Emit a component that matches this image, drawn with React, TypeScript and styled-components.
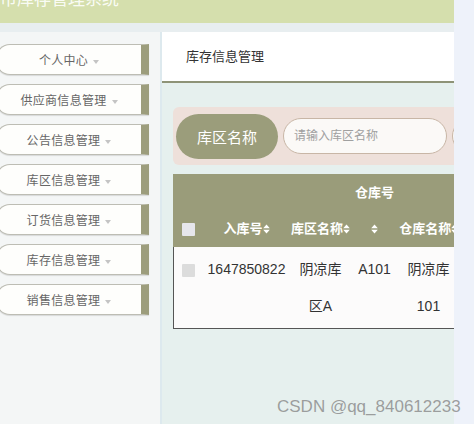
import styled, { createGlobalStyle } from 'styled-components';

const GlobalStyle = createGlobalStyle`
  html, body {
    margin: 0;
    padding: 0;
    background: #eef2fa;
    font-family: "Liberation Sans", "Noto Sans CJK SC", sans-serif;
  }
`;

const menus = ['个人中心', '供应商信息管理', '公告信息管理', '库区信息管理', '订货信息管理', '库存信息管理', '销售信息管理'];

const SortIcon = () => (
  <SortSvg width="7" height="10" viewBox="0 0 7 10">
    <path d="M3.5 0.5 L6.8 4.2 H0.2 Z M0.2 5.8 H6.8 L3.5 9.5 Z" fill="#fff" />
  </SortSvg>
);

const App = () => {
  return (
    <>
      <GlobalStyle />
      <Page>
        <TopBar>
          <Title>超市库存管理系统</Title>
        </TopBar>
        <Body>
          <Sidebar>
            {menus.map((m) => (
              <MenuItem key={m}>
                <MenuText>{m}</MenuText>
              </MenuItem>
            ))}
          </Sidebar>
          <Main>
            <Crumb>库存信息管理</Crumb>
            <SearchBar>
              <SearchLabel>库区名称</SearchLabel>
              <SearchInput placeholder="请输入库区名称" />
              <SearchInput placeholder="" />
            </SearchBar>
            <TableWrap>
              <Table>
                <colgroup>
                  <col style={{ width: 30 }} />
                  <col style={{ width: 86 }} />
                  <col style={{ width: 62 }} />
                  <col style={{ width: 46 }} />
                  <col style={{ width: 62 }} />
                </colgroup>
                <thead>
                  <tr>
                    <Th><Check $head /></Th>
                    <Th>入库号<SortIcon /></Th>
                    <Th>库区名称<SortIcon /></Th>
                    <Th>仓库号<SortIcon /></Th>
                    <Th>仓库名称<SortIcon /></Th>
                  </tr>
                </thead>
                <tbody>
                  <tr>
                    <Td><Check /></Td>
                    <Td>1647850822</Td>
                    <Td>阴凉库区A</Td>
                    <Td>A101</Td>
                    <Td>阴凉库101</Td>
                  </tr>
                </tbody>
              </Table>
            </TableWrap>
          </Main>
        </Body>
        <Watermark>CSDN @qq_840612233</Watermark>
      </Page>
    </>
  );
};

const Page = styled.div`
  position: relative;
  width: 454px;
  height: 424px;
  display: flex;
  flex-direction: column;
`;

const TopBar = styled.div`
  height: 23px;
  background: #d5dfad;
  overflow: hidden;
`;

const Title = styled.div`
  margin: -9px 0 0 -17px;
  font-size: 17px;
  line-height: 18px;
  color: rgba(255, 255, 255, 0.9);
  white-space: nowrap;
`;

const Body = styled.div`
  flex: 1;
  display: flex;
  background: #e8eef0;
  padding-top: 9px;
`;

const Sidebar = styled.div`
  width: 160px;
  background: #f4f6f6;
  padding-top: 12px;
  box-sizing: border-box;
`;

const MenuItem = styled.div`
  box-sizing: border-box;
  width: 153px;
  height: 31px;
  margin: 0 0 9px -4px;
  background: #fefefc;
  border: 1px solid #bdbdb4;
  border-right: 8px solid #9c9d7c;
  border-radius: 14px 0 0 14px;
  box-shadow: 0 1px 1px rgba(0, 0, 0, 0.12);
  display: flex;
  align-items: center;
  justify-content: center;
`;

const MenuText = styled.span`
  font-size: 12px;
  color: #666;
  letter-spacing: 0.3px;

  &::after {
    content: '';
    display: inline-block;
    margin-left: 5px;
    vertical-align: middle;
    border-top: 4px solid #c4c4c4;
    border-left: 3px solid transparent;
    border-right: 3px solid transparent;
  }
`;

const Main = styled.div`
  width: 292px;
  border-left: 2px solid #dde9ee;
  background: #e6f0ee;
  overflow: hidden;
`;

const Crumb = styled.div`
  height: 49px;
  line-height: 49px;
  background: #fff;
  border-bottom: 2px solid #8e9377;
  padding-left: 24px;
  font-size: 13px;
  color: #333;
`;

const SearchBar = styled.div`
  width: 330px;
  height: 58px;
  margin: 24px 0 0 11px;
  padding: 0 3px;
  box-sizing: border-box;
  background: #eee0da;
  border-radius: 6px 0 0 6px;
  display: flex;
  align-items: center;
  gap: 5px;
`;

const SearchLabel = styled.div`
  flex: none;
  width: 102px;
  height: 45px;
  border-radius: 23px;
  background: #9b9d7b;
  color: #fff;
  font-size: 15px;
  display: flex;
  align-items: center;
  justify-content: center;
`;

const SearchInput = styled.input`
  flex: none;
  box-sizing: border-box;
  width: 164px;
  height: 36px;
  border: 1.5px solid #c8b6a6;
  border-radius: 18px;
  background: #fbf9f7;
  padding: 0 10px;
  font-size: 12px;
  font-family: inherit;
  outline: none;

  &::placeholder {
    color: #a0a0a0;
  }
`;

const TableWrap = styled.div`
  margin: 9px 0 0 11px;
  width: 300px;
`;

const Table = styled.table`
  table-layout: fixed;
  width: 286px;
  border-collapse: collapse;
  border-left: 1px solid #555;
  border-bottom: 1px solid #555;
`;

const Th = styled.th`
  height: 73px;
  padding: 0;
  background: #9a9c7a;
  color: #fff;
  font-size: 13px;
  font-weight: bold;
  line-height: 36px;
  vertical-align: bottom;
  text-align: center;
  border-left: 1px solid #9a9c7a;
  margin-left: -1px;
`;

const Td = styled.td`
  padding: 4px 4px 3px;
  background: #fcfbfb;
  font-size: 14px;
  color: #333;
  line-height: 37px;
  vertical-align: top;
  text-align: center;
`;

const SortSvg = styled.svg`
  display: inline-block;
  vertical-align: -1px;
`;

const Check = styled.span<{ $head?: boolean }>`
  display: inline-block;
  width: 13px;
  height: 13px;
  vertical-align: middle;
  background: ${(p) => (p.$head ? '#e6e6ec' : '#dcdcdc')};
  border-radius: 1px;
`;

const Watermark = styled.div`
  position: absolute;
  left: 277px;
  top: 397px;
  font-size: 17px;
  color: rgba(130, 130, 130, 0.75);
  white-space: nowrap;
`;

export default App;
